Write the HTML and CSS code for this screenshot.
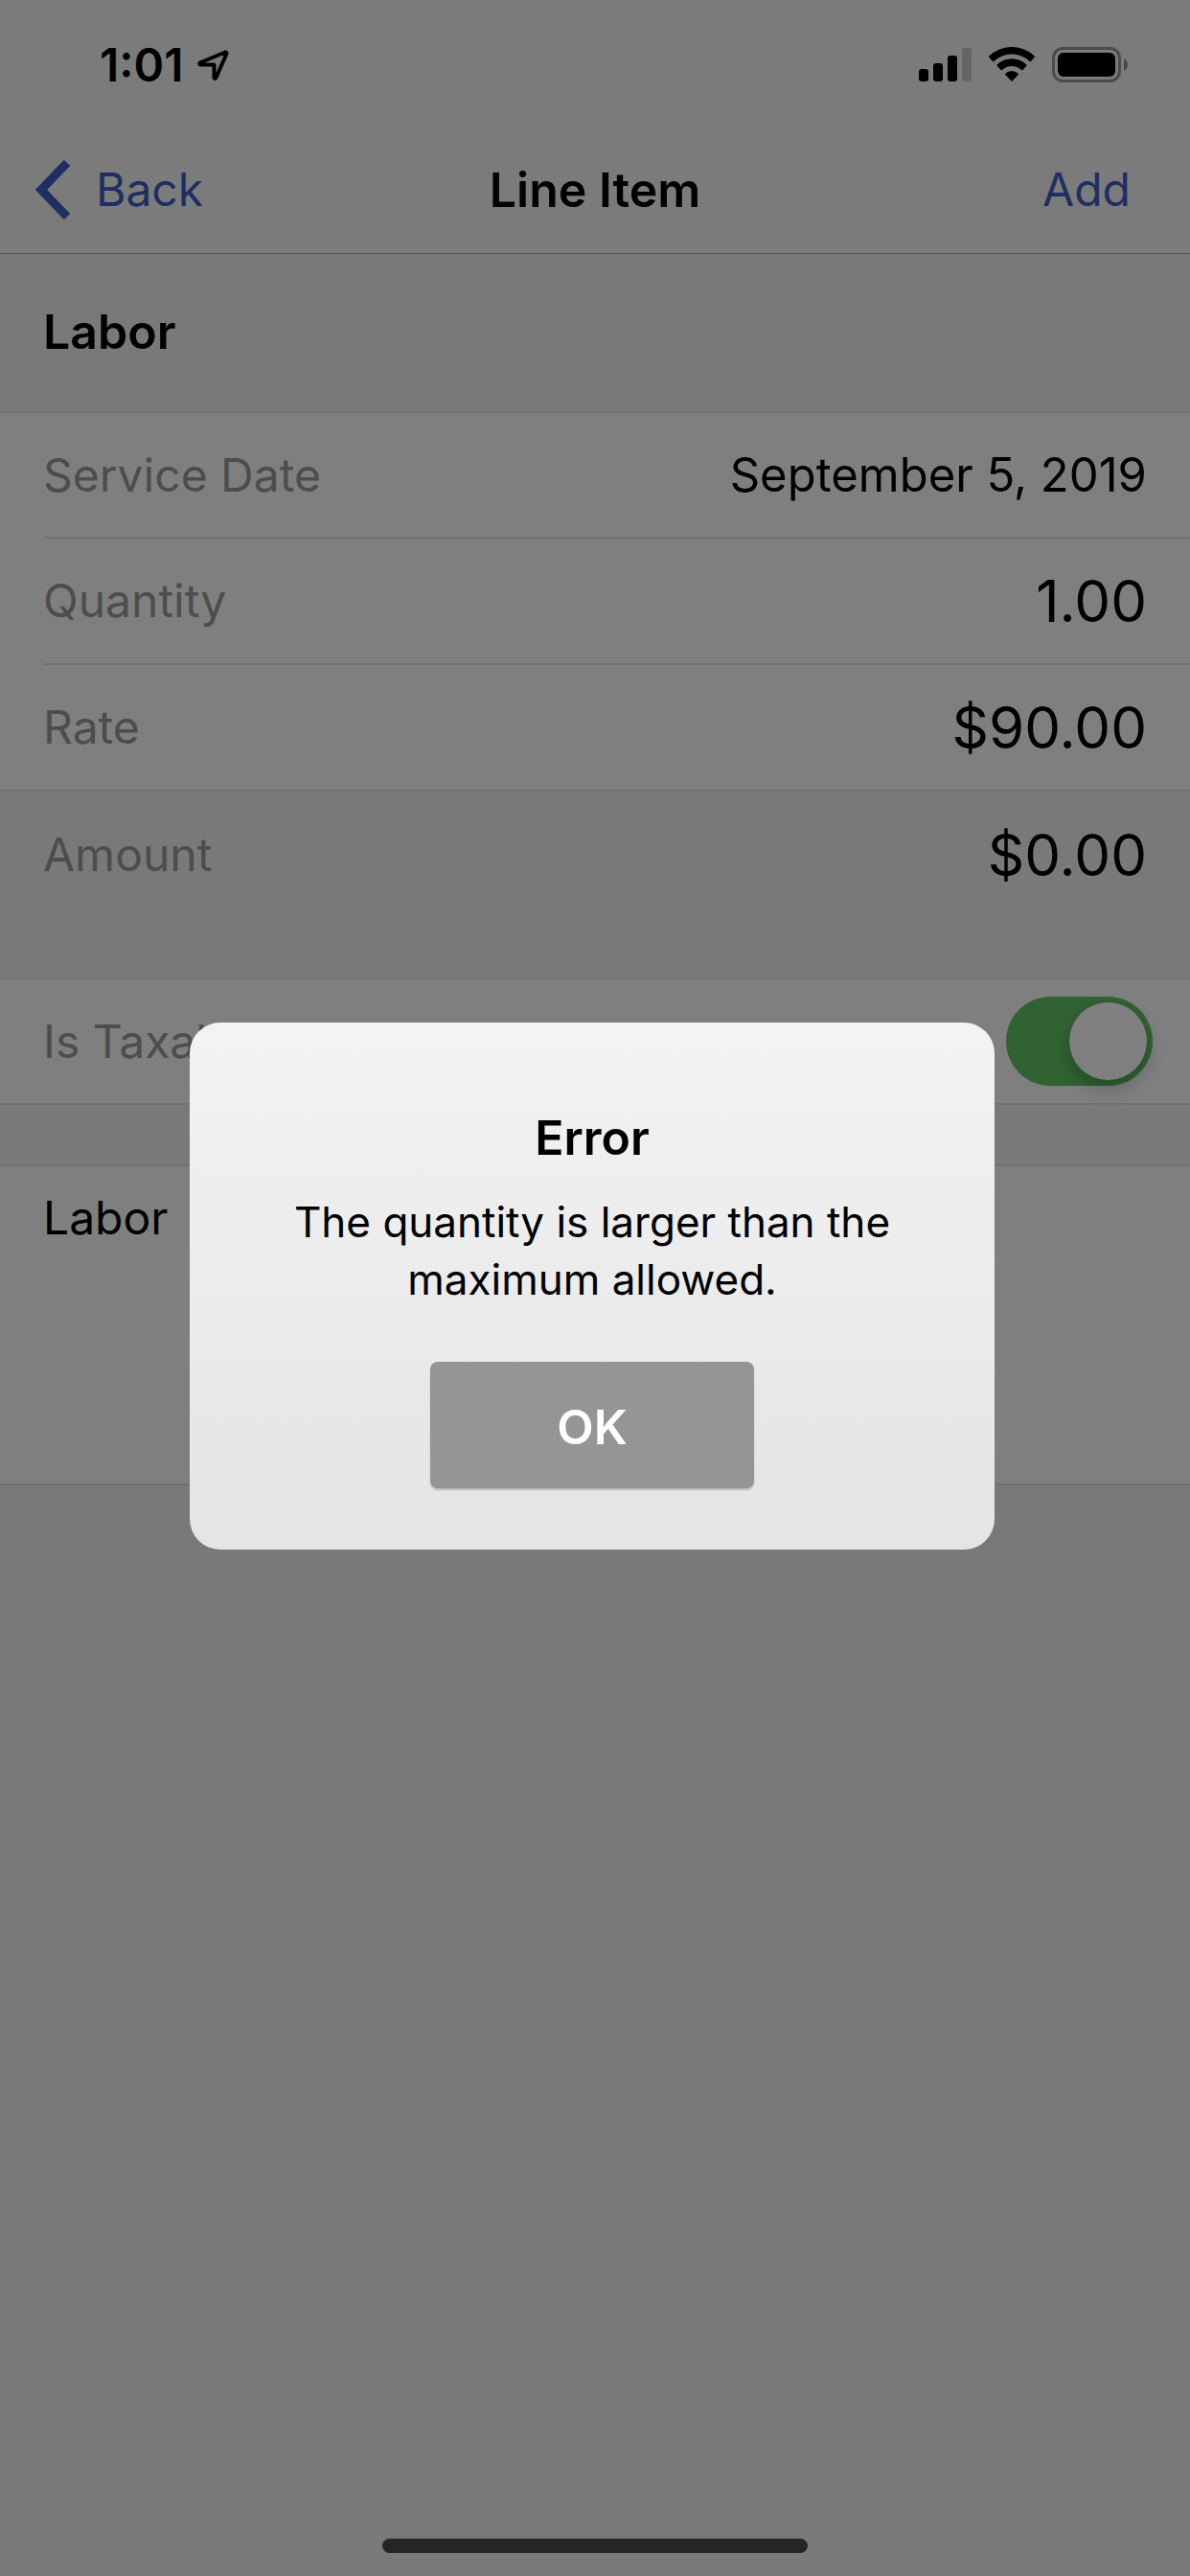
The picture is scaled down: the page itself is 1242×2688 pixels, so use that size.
FILE: index.html
```html
<!DOCTYPE html>
<html lang="en">
<head>
  <meta charset="utf-8">
  <meta name="viewport" content="width=device-width, initial-scale=1">
  <title>Line Item</title>
  <link rel="stylesheet" href="styles.css">
</head>
<body>
  <div class="screen">
    <header class="top">
      <div class="status">
        <div class="status-left">
          <span class="time">1:01</span>
          <svg class="location" width="33" height="34" viewBox="0 0 33 34" fill="none" stroke="#000" stroke-width="4" stroke-linejoin="round">
            <path d="M29 3.500 2.800 14.500Q1.500 16 3.500 16.500H17.500V30Q18.500 32 19.500 30L30.500 5Q30.500 3 29 3.500Z"/>
          </svg>
        </div>
        <div class="status-right">
          <svg width="55" height="37" viewBox="0 0 55 37">
            <rect x="0" y="23" width="10" height="13" rx="3"/>
            <rect x="15" y="17" width="10" height="19" rx="3"/>
            <rect x="30" y="9" width="10" height="27" rx="3"/>
            <rect x="45" y="1" width="10" height="35" rx="3" fill="#c6cac8"/>
          </svg>
          <svg width="48" height="37" viewBox="0 0 48 37">
            <path d="M0.300 10.800Q-.3 10.200 .3 9.600A34 34 0 0 1 47.700 9.600Q48.300 10.200 47.700 10.800L43.900 14.900Q43.300 15.500 42.600 14.900A27 27 0 0 0 5.400 14.900Q4.700 15.500 4.100 14.900Z"/>
            <path d="M8.600 19.700Q8 19.100 8.600 18.500A22 22 0 0 1 39.400 18.500Q40 19.100 39.400 19.700L35.400 24Q34.800 24.600 34.100 24A15 15 0 0 0 13.900 24Q13.200 24.600 12.600 24Z"/>
            <path d="M17.300 28.900Q16.700 28.300 17.300 27.700A10 10 0 0 1 30.700 27.700Q31.300 28.300 30.700 28.900L24.600 35.500Q24 36.100 23.400 35.500Z"/>
          </svg>
          <svg width="80" height="37" viewBox="0 0 80 37">
            <rect x="1.500" y="1.500" width="69" height="34" rx="10" fill="none" stroke="#969696" stroke-width="3"/>
            <rect x="6" y="6" width="60" height="25" rx="6"/>
            <path d="M75 12Q79 14 79 18.500T75 25Z" fill="#8c908e"/>
          </svg>
        </div>
      </div>
      <nav class="nav">
        <a class="back" href="#back">
          <svg width="40" height="62" viewBox="0 0 40 62" fill="none" stroke="currentColor" stroke-width="9" stroke-linejoin="miter">
            <path d="M34 3 7 31 34 59"/>
          </svg>
          Back
        </a>
        <h1 class="title">Line Item</h1>
        <a class="add" href="#add">Add</a>
      </nav>
    </header>

    <main>
      <h2 class="heading">Labor</h2>
      <div class="group">
        <div class="row">
          <label for="date">Service Date</label>
          <input id="date" class="value" type="text" value="September 5, 2019">
        </div>
        <div class="row">
          <label for="quantity">Quantity</label>
          <input id="quantity" class="value number" type="text" value="1.00">
        </div>
        <div class="row">
          <label for="rate">Rate</label>
          <input id="rate" class="value number" type="text" value="$90.00">
        </div>
      </div>
      <div class="summary">
        <span>Amount</span>
        <output class="number">$0.00</output>
      </div>
      <div class="group">
        <div class="row">
          <label for="taxable">Is Taxable</label>
          <input id="taxable" class="switch" type="checkbox" role="switch" checked>
        </div>
      </div>
      <div class="group notes">
        <textarea class="description" aria-label="Description">Labor</textarea>
      </div>
    </main>

    <div class="home-indicator"></div>
  </div>

  <div class="scrim">
    <div class="alert" role="alertdialog" aria-labelledby="alert-title" aria-describedby="alert-text">
      <h2 id="alert-title" class="alert-title">Error</h2>
      <p id="alert-text" class="alert-text">The quantity is larger than the maximum allowed.</p>
      <button class="ok" type="button">OK</button>
    </div>
  </div>
</body>
</html>
```
FILE: styles.css
```css
* {
  box-sizing: border-box;
}

body {
  margin: 0;
  background: #f1f2f5;
  color: #000;
  font-family: Inter, "Liberation Sans", sans-serif;
  font-size: 48px;
  line-height: 60px;
}

h1,
h2,
p {
  margin: 0;
  font-size: inherit;
}

svg {
  display: block;
  flex: none;
}

input,
textarea,
button {
  font: inherit;
  color: inherit;
}

a {
  color: #3e5cc6;
  text-decoration: none;
}

.screen {
  display: flex;
  flex-direction: column;
  min-height: 100vh;
}

.top {
  background: #f7f7f7;
  border-bottom: 1px solid #a8a8a8;
}

.status {
  display: flex;
  align-items: center;
  justify-content: space-between;
  height: 132px;
  padding: 3px 64px 0 104px;
}

.status-left {
  display: flex;
  align-items: center;
  gap: 14px;
}

.time {
  font-weight: 600;
}

.status-right {
  display: flex;
  align-items: center;
  gap: 18px;
}

.nav {
  display: grid;
  grid-template-columns: 1fr auto 1fr;
  align-items: center;
  height: 132px;
  padding: 0 36px;
}

.back {
  display: flex;
  align-items: center;
  gap: 24px;
}

.title {
  font-size: 50px;
  font-weight: 600;
}

.add {
  justify-self: end;
  padding-right: 26px;
}

.heading {
  padding: 51px 45px 53px;
  font-size: 50px;
  font-weight: 600;
}

.group {
  background: #fff;
  border: solid #e4e4e6;
  border-width: 2px 0;
}

.row {
  display: flex;
  align-items: center;
  justify-content: space-between;
  min-height: 129px;
  margin-left: 45px;
  padding-right: 45px;
}

.row + .row {
  min-height: 132px;
  border-top: 2px solid #e4e4e6;
}

label,
.summary span {
  color: #9b9b9b;
}

.value {
  flex: 1;
  min-width: 0;
  padding: 0;
  border: 0;
  background: none;
  font-size: 49px;
  text-align: right;
}

.number {
  font-size: 60px;
}

.summary {
  display: flex;
  align-items: center;
  justify-content: space-between;
  height: 132px;
  margin-bottom: 62px;
  padding: 0 45px;
}

.switch {
  appearance: none;
  width: 153px;
  height: 93px;
  margin: 0 -6px 0 0;
  padding: 6px;
  border-radius: 47px;
  background: #e4e4e6;
}

.switch::before {
  content: "";
  display: block;
  width: 81px;
  height: 81px;
  border-radius: 50%;
  background: #fff;
  box-shadow: 0 8px 20px rgba(0, 0, 0, 0.25);
}

.switch:checked {
  background: #62c665;
}

.switch:checked::before {
  margin-left: auto;
}

.notes {
  margin-top: 62px;
}

.description {
  display: block;
  width: 100%;
  height: 331px;
  padding: 24px 45px;
  border: 0;
  background: none;
  resize: none;
}

.home-indicator {
  width: 444px;
  height: 15px;
  margin: auto auto 24px;
  border-radius: 8px;
  background: #4b4b4b;
}

.scrim {
  position: fixed;
  inset: 0;
  display: flex;
  align-items: center;
  justify-content: center;
  padding: 0 6px 4px 0;
  background: rgba(0, 0, 0, 0.5);
}

.alert {
  display: flex;
  flex-direction: column;
  align-items: center;
  width: 68%;
  max-width: 840px;
  padding: 90px 90px 64px;
  border-radius: 32px;
  background: linear-gradient(#f3f3f3, #e4e4e4);
  text-align: center;
}

.alert-title {
  font-size: 50px;
  font-weight: 600;
}

.alert-text {
  margin: 28px 0 56px;
  font-size: 44px;
}

.ok {
  width: 338px;
  height: 132px;
  padding: 4px 0 0;
  border: 0;
  border-radius: 8px;
  background: #959595;
  box-shadow: 0 2px 2px rgba(0, 0, 0, 0.2);
  color: #fff;
  font-size: 50px;
  font-weight: 600;
}
```
